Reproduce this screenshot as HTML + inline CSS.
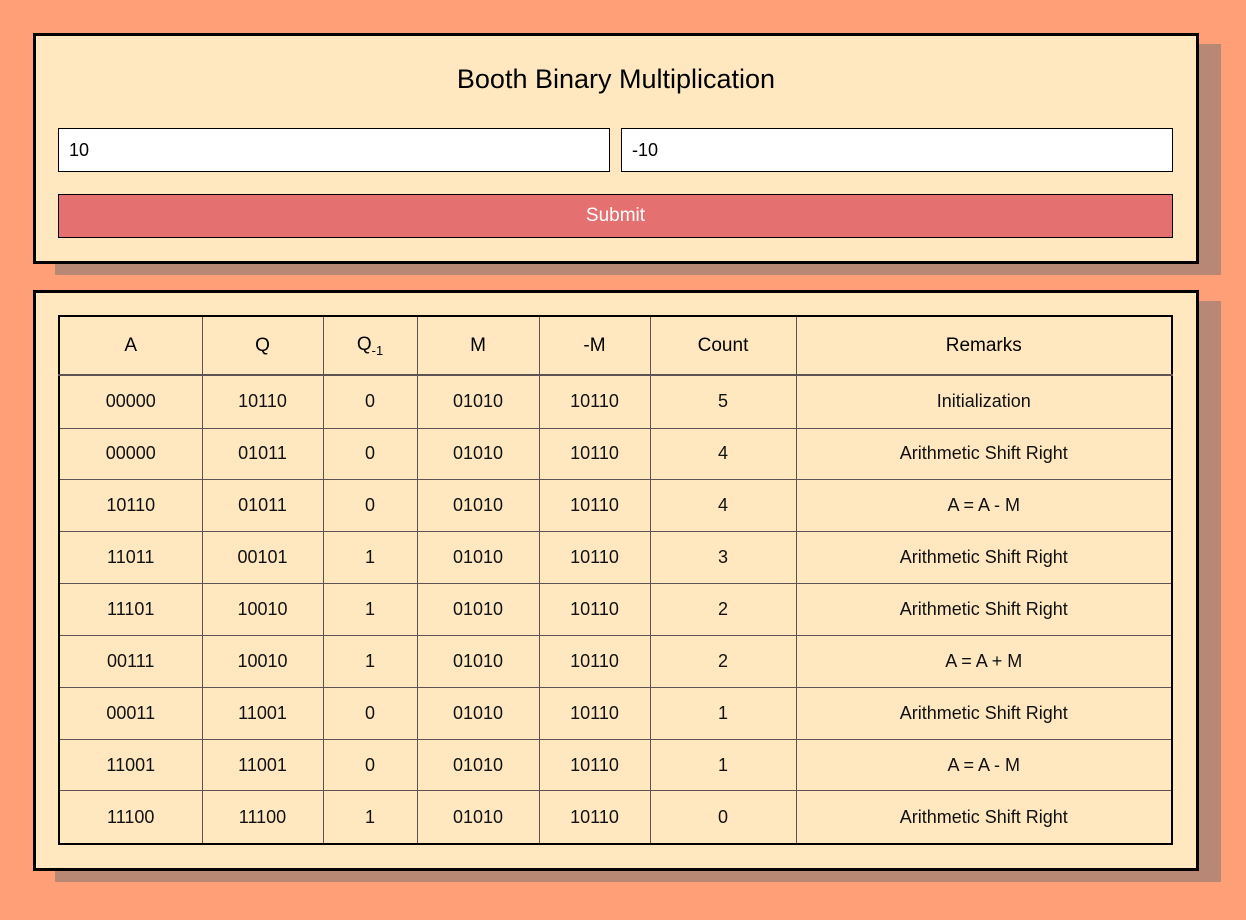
<!DOCTYPE html>
<html><head><meta charset="utf-8"><style>
*{box-sizing:border-box;margin:0;padding:0}
body{width:1246px;height:920px;background:#ff9f77;font-family:"Liberation Sans",sans-serif;position:relative;overflow:hidden}
.box{position:absolute;left:33px;width:1166px;background:#ffe8c0;border:3px solid #000;box-shadow:22px 11px 0 #b98875}
h1{position:absolute;top:28px;left:0;right:0;text-align:center;font-weight:normal;font-size:27px;color:#000}
.inp{position:absolute;top:92px;height:44px;background:#fff;border:1px solid #000;font-size:18px;padding:11px 10px}
.btn{position:absolute;top:158px;left:22px;width:1115px;height:44px;background:#e57070;border:1px solid #000;color:#fff;font-size:19px;text-align:center;line-height:42px}
table{position:absolute;left:22px;top:22px;width:1115px;height:530px;border-collapse:collapse;table-layout:fixed;border:2px solid #000}
td,th{border:1px solid #5e5252;text-align:center;font-size:18px;color:#111;font-weight:normal}
th{font-size:19px;height:59px;color:#000}
tr.h th{border-bottom:2px solid #5e5252}
sub{font-size:13px}
</style></head><body>
<div class="box" style="top:33px;height:231px">
<h1>Booth Binary Multiplication</h1>
<div class="inp" style="left:22px;width:552px">10</div>
<div class="inp" style="left:585px;width:552px">-10</div>
<div class="btn">Submit</div>
</div>
<div class="box" style="top:290px;height:581px">
<table>
<colgroup><col style="width:143px"><col style="width:121px"><col style="width:94px"><col style="width:122px"><col style="width:111px"><col style="width:146px"><col></colgroup>
<tr class="h"><th>A</th><th>Q</th><th>Q<sub>-1</sub></th><th>M</th><th>-M</th><th>Count</th><th>Remarks</th></tr>
<tr><td>00000</td><td>10110</td><td>0</td><td>01010</td><td>10110</td><td>5</td><td>Initialization</td></tr>
<tr><td>00000</td><td>01011</td><td>0</td><td>01010</td><td>10110</td><td>4</td><td>Arithmetic Shift Right</td></tr>
<tr><td>10110</td><td>01011</td><td>0</td><td>01010</td><td>10110</td><td>4</td><td>A = A - M</td></tr>
<tr><td>11011</td><td>00101</td><td>1</td><td>01010</td><td>10110</td><td>3</td><td>Arithmetic Shift Right</td></tr>
<tr><td>11101</td><td>10010</td><td>1</td><td>01010</td><td>10110</td><td>2</td><td>Arithmetic Shift Right</td></tr>
<tr><td>00111</td><td>10010</td><td>1</td><td>01010</td><td>10110</td><td>2</td><td>A = A + M</td></tr>
<tr><td>00011</td><td>11001</td><td>0</td><td>01010</td><td>10110</td><td>1</td><td>Arithmetic Shift Right</td></tr>
<tr><td>11001</td><td>11001</td><td>0</td><td>01010</td><td>10110</td><td>1</td><td>A = A - M</td></tr>
<tr><td>11100</td><td>11100</td><td>1</td><td>01010</td><td>10110</td><td>0</td><td>Arithmetic Shift Right</td></tr>
</table>
</div>
</body></html>
